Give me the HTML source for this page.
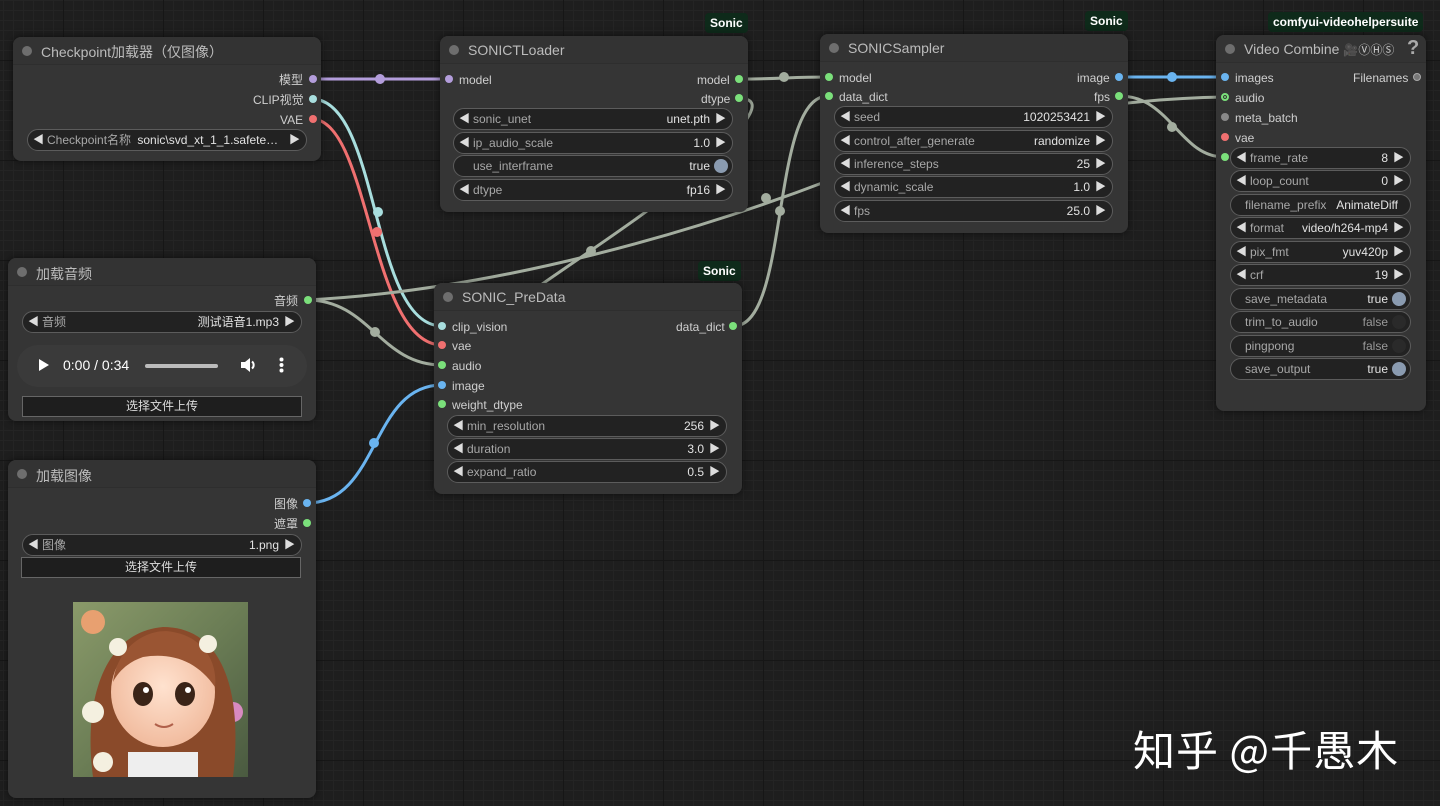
<!DOCTYPE html>
<html><head><meta charset="utf-8"><style>
*{margin:0;padding:0;box-sizing:border-box}
body{width:1440px;height:806px;overflow:hidden;position:relative;background:#1e1e1e;
background-image:linear-gradient(#161616 1px,transparent 1px),linear-gradient(90deg,#161616 1px,transparent 1px),linear-gradient(#242424 1px,transparent 1px),linear-gradient(90deg,#242424 1px,transparent 1px);
background-size:100px 100px,100px 100px,10px 10px,10px 10px;background-position:-37px -40px;
font-family:"Liberation Sans","Noto Sans CJK SC",sans-serif;}
.node{position:absolute;background:#353535;border-radius:8px;box-shadow:0 0 8px rgba(0,0,0,.55)}
.node .hd{position:absolute;left:0;right:0;top:0;height:28px;border-bottom:1px solid #2e2e2e;border-radius:8px 8px 0 0;background:#333}
.t{position:absolute;color:#bcbcbc;font-size:14px;white-space:nowrap}
.hdot{position:absolute;width:10px;height:10px;border-radius:50%;background:#6e6e6e}
.s{position:absolute;color:#cfcfcf;font-size:12px;white-space:nowrap;line-height:14px}
.d{position:absolute;width:8px;height:8px;border-radius:50%}
.w{position:absolute;height:22px;border:1px solid #5c5c5c;border-radius:11px;background:#222;font-size:12px;color:#a8a8a8;line-height:20px;white-space:nowrap}
.w .l{position:absolute;left:19px}
.w .v{position:absolute;right:22px;color:#e2e2e2}
.w .a{position:absolute;left:5px;color:#ddd;font-size:11px}
.w .b{position:absolute;right:6px;color:#ddd;font-size:11px}
.w .tg{position:absolute;right:4px;top:3px;width:14px;height:14px;border-radius:50%;background:#8a9bb0}
.w .tf{position:absolute;right:4px;top:3px;width:14px;height:14px;border-radius:50%;background:#2a2a2a}
.badge{position:absolute;background:#0e2a1a;color:#fff;font-size:12px;font-weight:bold;height:20px;line-height:20px;padding:0 5px;border-radius:4px}
.btn{position:absolute;height:21px;border:1px solid #666;background:#1e1e1e;color:#ddd;font-size:12px;text-align:center;line-height:19px}
</style></head><body>

<svg style="position:absolute;left:0;top:0" width="1440" height="806">
<g fill="none" stroke-width="3">
<path d="M312 79 L448 79" stroke="#b39ddb"/>
<path d="M312 99 C380 99 370 326 442 326" stroke="#a8dede"/>
<path d="M312 119 C370 119 370 345 442 345" stroke="#f07070"/>
<path d="M307 300 C370 300 380 365 442 365" stroke="#a3ad9f"/>
<path d="M307 300 C500 290 700 230 830 180 C950 140 1050 100 1224 97" stroke="#a3ad9f"/>
<path d="M307 503 C380 503 370 385 442 385" stroke="#6ab4f0"/>
<path d="M740 98 C770 100 740 130 700 170 C640 220 560 270 520 300" stroke="#a3ad9f"/>
<path d="M734 326 C790 326 770 96 828 96" stroke="#a3ad9f"/>
<path d="M740 79 C780 79 790 77 828 77" stroke="#a3ad9f"/>
<path d="M1120 77 L1224 77" stroke="#6ab4f0"/>
<path d="M1120 96 C1170 96 1180 157 1224 157" stroke="#a3ad9f"/>
</g>
<g>
<circle cx="380" cy="79" r="5" fill="#b39ddb"/>
<circle cx="378" cy="212" r="5" fill="#a8dede"/>
<circle cx="377" cy="232" r="5" fill="#f07070"/>
<circle cx="375" cy="332" r="5" fill="#a3ad9f"/>
<circle cx="374" cy="443" r="5" fill="#6ab4f0"/>
<circle cx="591" cy="251" r="5" fill="#a3ad9f"/>
<circle cx="766" cy="198" r="5" fill="#a3ad9f"/>
<circle cx="780" cy="211" r="5" fill="#a3ad9f"/>
<circle cx="784" cy="77" r="5" fill="#a3ad9f"/>
<circle cx="1172" cy="77" r="5" fill="#6ab4f0"/>
<circle cx="1172" cy="127" r="5" fill="#a3ad9f"/>
</g>
</svg>

<!-- Checkpoint -->
<div class="node" style="left:13px;top:37px;width:308px;height:124px"><div class="hd"></div></div>
<div class="hdot" style="left:22px;top:46px"></div>
<div class="t" style="left:41px;top:42px">Checkpoint加载器（仅图像）</div>
<div class="s" style="left:279px;top:73px">模型</div><div class="d" style="left:309px;top:75px;background:#b39ddb"></div>
<div class="s" style="left:253px;top:93px">CLIP视觉</div><div class="d" style="left:309px;top:95px;background:#a8dede"></div>
<div class="s" style="left:280px;top:113px">VAE</div><div class="d" style="left:309px;top:115px;background:#f07070"></div>
<div class="w" style="left:27px;top:129px;width:280px"><span class="a">◀</span><span class="l">Checkpoint名称 <b style="font-weight:normal;color:#e2e2e2;margin-left:3px">sonic\svd_xt_1_1.safete…</b></span><span class="b">▶</span></div>

<!-- SONICTLoader -->
<div class="badge" style="left:705px;top:13px">Sonic</div>
<div class="node" style="left:440px;top:36px;width:308px;height:176px"><div class="hd"></div></div>
<div class="hdot" style="left:449px;top:45px"></div>
<div class="t" style="left:468px;top:42px">SONICTLoader</div>
<div class="d" style="left:445px;top:75px;background:#b39ddb"></div><div class="s" style="left:459px;top:73px">model</div>
<div class="s" style="left:697px;top:73px">model</div><div class="d" style="left:735px;top:75px;background:#7be07b"></div>
<div class="s" style="left:701px;top:92px">dtype</div><div class="d" style="left:735px;top:94px;background:#7be07b"></div>
<div class="w" style="left:453px;top:108px;width:280px"><span class="a">◀</span><span class="l">sonic_unet</span><span class="v">unet.pth</span><span class="b">▶</span></div>
<div class="w" style="left:453px;top:132px;width:280px"><span class="a">◀</span><span class="l">ip_audio_scale</span><span class="v">1.0</span><span class="b">▶</span></div>
<div class="w" style="left:453px;top:155px;width:280px"><span class="l">use_interframe</span><span class="v">true</span><span class="tg"></span></div>
<div class="w" style="left:453px;top:179px;width:280px"><span class="a">◀</span><span class="l">dtype</span><span class="v">fp16</span><span class="b">▶</span></div>

<!-- SONICSampler -->
<div class="badge" style="left:1085px;top:11px">Sonic</div>
<div class="node" style="left:820px;top:34px;width:308px;height:199px"><div class="hd"></div></div>
<div class="hdot" style="left:829px;top:43px"></div>
<div class="t" style="left:848px;top:40px">SONICSampler</div>
<div class="d" style="left:825px;top:73px;background:#7be07b"></div><div class="s" style="left:839px;top:71px">model</div>
<div class="d" style="left:825px;top:92px;background:#7be07b"></div><div class="s" style="left:839px;top:90px">data_dict</div>
<div class="s" style="left:1077px;top:71px">image</div><div class="d" style="left:1115px;top:73px;background:#6ab4f0"></div>
<div class="s" style="left:1094px;top:90px">fps</div><div class="d" style="left:1115px;top:92px;background:#7be07b"></div>
<div class="w" style="left:834px;top:106px;width:279px"><span class="a">◀</span><span class="l">seed</span><span class="v">1020253421</span><span class="b">▶</span></div>
<div class="w" style="left:834px;top:130px;width:279px"><span class="a">◀</span><span class="l">control_after_generate</span><span class="v">randomize</span><span class="b">▶</span></div>
<div class="w" style="left:834px;top:153px;width:279px"><span class="a">◀</span><span class="l">inference_steps</span><span class="v">25</span><span class="b">▶</span></div>
<div class="w" style="left:834px;top:176px;width:279px"><span class="a">◀</span><span class="l">dynamic_scale</span><span class="v">1.0</span><span class="b">▶</span></div>
<div class="w" style="left:834px;top:200px;width:279px"><span class="a">◀</span><span class="l">fps</span><span class="v">25.0</span><span class="b">▶</span></div>

<!-- Video Combine -->
<div class="badge" style="left:1268px;top:12px">comfyui-videohelpersuite</div>
<div class="node" style="left:1216px;top:35px;width:210px;height:376px"><div class="hd"></div></div>
<div class="hdot" style="left:1225px;top:44px"></div>
<div class="t" style="left:1244px;top:41px">Video Combine <span style="font-size:12px;color:#ccc">🎥ⓋⒽⓈ</span></div>
<div class="t" style="left:1407px;top:37px;font-size:20px;font-weight:bold;color:#aaa">?</div>
<div class="d" style="left:1221px;top:73px;background:#6ab4f0"></div><div class="s" style="left:1235px;top:71px">images</div>
<div class="s" style="left:1353px;top:71px">Filenames</div><div class="d" style="left:1413px;top:73px;background:#777;border:1px solid #aaa"></div>
<div class="d" style="left:1221px;top:93px;background:#7be07b;border:2px solid #7be07b;box-shadow:inset 0 0 0 1px #333"></div><div class="s" style="left:1235px;top:91px">audio</div>
<div class="d" style="left:1221px;top:113px;background:#888"></div><div class="s" style="left:1235px;top:111px">meta_batch</div>
<div class="d" style="left:1221px;top:133px;background:#f07070"></div><div class="s" style="left:1235px;top:131px">vae</div>
<div class="d" style="left:1221px;top:153px;background:#7be07b"></div>
<div class="w" style="left:1230px;top:147px;width:181px"><span class="a">◀</span><span class="l">frame_rate</span><span class="v">8</span><span class="b">▶</span></div>
<div class="w" style="left:1230px;top:170px;width:181px"><span class="a">◀</span><span class="l">loop_count</span><span class="v">0</span><span class="b">▶</span></div>
<div class="w" style="left:1230px;top:194px;width:181px"><span class="l" style="left:14px">filename_prefix</span><span class="v" style="right:12px">AnimateDiff</span></div>
<div class="w" style="left:1230px;top:217px;width:181px"><span class="a">◀</span><span class="l">format</span><span class="v">video/h264-mp4</span><span class="b">▶</span></div>
<div class="w" style="left:1230px;top:241px;width:181px"><span class="a">◀</span><span class="l">pix_fmt</span><span class="v">yuv420p</span><span class="b">▶</span></div>
<div class="w" style="left:1230px;top:264px;width:181px"><span class="a">◀</span><span class="l">crf</span><span class="v">19</span><span class="b">▶</span></div>
<div class="w" style="left:1230px;top:288px;width:181px"><span class="l" style="left:14px">save_metadata</span><span class="v">true</span><span class="tg"></span></div>
<div class="w" style="left:1230px;top:311px;width:181px"><span class="l" style="left:14px">trim_to_audio</span><span class="v" style="color:#999">false</span><span class="tf"></span></div>
<div class="w" style="left:1230px;top:335px;width:181px"><span class="l" style="left:14px">pingpong</span><span class="v" style="color:#999">false</span><span class="tf"></span></div>
<div class="w" style="left:1230px;top:358px;width:181px"><span class="l" style="left:14px">save_output</span><span class="v">true</span><span class="tg"></span></div>

<!-- 加载音频 -->
<div class="node" style="left:8px;top:258px;width:308px;height:163px"><div class="hd"></div></div>
<div class="hdot" style="left:17px;top:267px"></div>
<div class="t" style="left:36px;top:264px">加载音频</div>
<div class="s" style="left:274px;top:294px">音频</div><div class="d" style="left:304px;top:296px;background:#7be07b"></div>
<div class="w" style="left:22px;top:311px;width:280px"><span class="a">◀</span><span class="l">音频</span><span class="v">测试语音1.mp3</span><span class="b">▶</span></div>
<div style="position:absolute;left:17px;top:345px;width:290px;height:42px;border-radius:21px;background:#3a3a3a"></div>
<div style="position:absolute;left:39px;top:359px;width:0;height:0;border-left:10px solid #fff;border-top:6px solid transparent;border-bottom:6px solid transparent"></div>
<div class="s" style="left:63px;top:358px;color:#fff;font-size:14px">0:00 / 0:34</div>
<div style="position:absolute;left:145px;top:364px;width:73px;height:4px;border-radius:2px;background:#bbb"></div>
<svg style="position:absolute;left:240px;top:357px" width="18" height="16" viewBox="0 0 18 16"><path d="M1 5h4l5-4v14l-5-4H1z" fill="#fff"/><path d="M12 4.5a4.5 4.5 0 0 1 0 7" stroke="#fff" stroke-width="2" fill="none"/></svg>
<svg style="position:absolute;left:279px;top:357px" width="5" height="16"><circle cx="2.5" cy="2.5" r="2" fill="#fff"/><circle cx="2.5" cy="8" r="2" fill="#fff"/><circle cx="2.5" cy="13.5" r="2" fill="#fff"/></svg>
<div class="btn" style="left:22px;top:396px;width:280px">选择文件上传</div>

<!-- SONIC_PreData -->
<div class="badge" style="left:698px;top:261px">Sonic</div>
<div class="node" style="left:434px;top:283px;width:308px;height:211px"><div class="hd"></div></div>
<div class="hdot" style="left:443px;top:292px"></div>
<div class="t" style="left:462px;top:289px">SONIC_PreData</div>
<div class="d" style="left:438px;top:322px;background:#a8dede"></div><div class="s" style="left:452px;top:320px">clip_vision</div>
<div class="d" style="left:438px;top:341px;background:#f07070"></div><div class="s" style="left:452px;top:339px">vae</div>
<div class="d" style="left:438px;top:361px;background:#7be07b"></div><div class="s" style="left:452px;top:359px">audio</div>
<div class="d" style="left:438px;top:381px;background:#6ab4f0"></div><div class="s" style="left:452px;top:379px">image</div>
<div class="d" style="left:438px;top:400px;background:#7be07b"></div><div class="s" style="left:452px;top:398px">weight_dtype</div>
<div class="s" style="left:676px;top:320px">data_dict</div><div class="d" style="left:729px;top:322px;background:#7be07b"></div>
<div class="w" style="left:447px;top:415px;width:280px"><span class="a">◀</span><span class="l">min_resolution</span><span class="v">256</span><span class="b">▶</span></div>
<div class="w" style="left:447px;top:438px;width:280px"><span class="a">◀</span><span class="l">duration</span><span class="v">3.0</span><span class="b">▶</span></div>
<div class="w" style="left:447px;top:461px;width:280px"><span class="a">◀</span><span class="l">expand_ratio</span><span class="v">0.5</span><span class="b">▶</span></div>

<!-- 加载图像 -->
<div class="node" style="left:8px;top:460px;width:308px;height:338px"><div class="hd"></div></div>
<div class="hdot" style="left:17px;top:469px"></div>
<div class="t" style="left:36px;top:466px">加载图像</div>
<div class="s" style="left:274px;top:497px">图像</div><div class="d" style="left:303px;top:499px;background:#6ab4f0"></div>
<div class="s" style="left:274px;top:517px">遮罩</div><div class="d" style="left:303px;top:519px;background:#7be07b"></div>
<div class="w" style="left:22px;top:534px;width:280px"><span class="a">◀</span><span class="l">图像</span><span class="v">1.png</span><span class="b">▶</span></div>
<div class="btn" style="left:21px;top:557px;width:280px">选择文件上传</div>
<svg style="position:absolute;left:73px;top:602px" width="175" height="175" viewBox="0 0 175 175">
<defs><linearGradient id="bg" x1="0" y1="0" x2="1" y2="1"><stop offset="0" stop-color="#8a9a6a"/><stop offset=".5" stop-color="#6b7d55"/><stop offset="1" stop-color="#4a5a40"/></linearGradient>
<radialGradient id="fc" cx=".5" cy=".45" r=".6"><stop offset="0" stop-color="#ffe2cf"/><stop offset="1" stop-color="#f0b89a"/></radialGradient></defs>
<rect width="175" height="175" fill="url(#bg)"/>
<circle cx="20" cy="20" r="12" fill="#e8a070"/><circle cx="160" cy="110" r="10" fill="#d88ac0"/>
<path d="M20 175 C10 100 30 30 90 25 C150 25 170 90 160 175 Z" fill="#8a4a2a"/>
<ellipse cx="90" cy="90" rx="52" ry="55" fill="url(#fc)"/>
<path d="M40 80 C45 40 80 25 100 30 C130 35 145 60 142 85 C125 60 100 50 70 55 C55 60 45 70 40 80Z" fill="#9a5533"/>
<ellipse cx="70" cy="92" rx="10" ry="12" fill="#3a2418"/><ellipse cx="112" cy="92" rx="10" ry="12" fill="#3a2418"/>
<circle cx="73" cy="88" r="3" fill="#fff"/><circle cx="115" cy="88" r="3" fill="#fff"/>
<path d="M82 122 Q91 128 100 122" stroke="#b0604a" stroke-width="2" fill="none"/>
<rect x="55" y="150" width="70" height="25" fill="#eee"/>
<circle cx="45" cy="45" r="9" fill="#f4f0e0"/><circle cx="135" cy="42" r="9" fill="#f4f0e0"/>
<circle cx="20" cy="110" r="11" fill="#f4f0e0"/><circle cx="30" cy="160" r="10" fill="#f4f0e0"/>
</svg>

<div style="position:absolute;left:1133px;top:718px;color:#fff;font-size:42px;font-family:'Noto Sans CJK SC',sans-serif;white-space:nowrap;letter-spacing:1px">知乎 @千愚木</div>
</body></html>
